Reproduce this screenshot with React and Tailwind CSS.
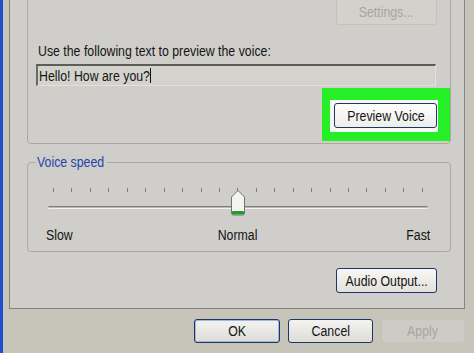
import React from "react";

function Txt({ children, origin = "origin-center" }) {
  return <span className={"inline-block whitespace-nowrap scale-x-[0.88] " + origin}>{children}</span>;
}

function Btn({ children, className = "" }) {
  return (
    <div
      className={
        "flex items-center justify-center rounded-[3px] border text-[14px] leading-[16px] " + className
      }
    >
      <Txt>{children}</Txt>
    </div>
  );
}

export default function App() {
  const ticks = Array.from({ length: 21 });
  return (
    <div className="w-[474px] h-[353px] overflow-hidden flex bg-[#c7c4b9] font-['Liberation_Sans',Arial,sans-serif] text-[#141414]">
      <div className="w-[3px] h-full shrink-0 bg-[#1f4fd0]" />
      <div className="flex flex-col shrink-0">
        {/* tab page */}
        <div className="ml-[6px] mt-[-10px] w-[456px] h-[319px] border border-[#85857f] bg-[#cfcecA] bg-[#cecdc8] flex flex-col pl-[17px] pr-[13px]">
          {/* upper group */}
          <div className="relative h-[153px] border border-[#a9a9a1] rounded-[4px] flex flex-col">
            <div className="absolute left-[294px] top-[96px] w-[128px] h-[53px] bg-[#27ef27]" />
            <div className="absolute left-[302px] top-[108px] w-[108px] h-[32px] bg-[#f7f7f5]" />
            <Btn className="mt-[6px] self-end mr-[13px] w-[101px] h-[27px] border-[#c3c2ba] text-[#a6a59e] bg-[#d2d1cc]">
              Settings...
            </Btn>
            <div className="mt-[18px] ml-[10px] text-[14px] leading-[16px]">
              <Txt origin="origin-left">Use the following text to preview the voice:</Txt>
            </div>
            <div className="mt-[5px] ml-[8px] w-[400px] h-[22px] border-t-2 border-l-2 border-t-[#5d5d58] border-l-[#6a6a65] border-b border-r border-b-[#e2e1dc] border-r-[#e2e1dc] bg-[#d3d2cd] flex items-center pl-[1px]">
              <div className="text-[14px] leading-[16px] flex items-center">
                <span className="inline-block w-[111px] overflow-visible">
                  <Txt origin="origin-left">Hello! How are you?</Txt>
                </span>
                <span className="inline-block w-px h-[15px] bg-[#111]" />
              </div>
            </div>
            <Btn className="relative z-10 mt-[17px] self-end mr-[13px] w-[103px] h-[25px] border-[#1f3566] bg-linear-to-b from-[#fdfdfc] to-[#eeeeea]">
              Preview Voice
            </Btn>
          </div>

          {/* voice speed group */}
          <div className="relative mt-[18px] h-[90px] border border-[#a9a9a1] rounded-[4px] flex flex-col">
            <div className="absolute left-[7px] top-[-9px] w-[72px] px-[2px] bg-[#cecdc8] text-[14px] leading-[16px] text-[#1f45b5]">
              <Txt origin="origin-left">Voice speed</Txt>
            </div>
            <div className="relative ml-[18px] w-[384px] flex flex-col">
              <div className="mt-[25px] h-[4px] flex justify-between px-[7px]">
                {ticks.map((_, i) => (
                  <div key={i} className="w-px h-[4px] bg-[#7c7c78]" />
                ))}
              </div>
              <div className="mt-[14px] mx-[2px] h-[3px] rounded-full border-t border-t-[#7f7f7a] border-b border-b-[#f2f2ee] bg-[#b9b8b3]" />
              <div className="absolute left-[185px] top-[27px]">
                <svg width="14" height="26" viewBox="0 0 14 26">
                  <path d="M7 0.5 L13.5 7 L13.5 23 Q13.5 25 11.5 25 L2.5 25 Q0.5 25 0.5 23 L0.5 7 Z" fill="#f4f4f0" stroke="#6e766e" />
                  <rect x="1" y="21" width="12" height="3.5" rx="1" fill="#1f9d2a" />
                </svg>
              </div>
              <div className="mt-[18px] grid grid-cols-3 text-[14px] leading-[16px]">
                <div className="text-left">
                  <Txt origin="origin-left">Slow</Txt>
                </div>
                <div className="text-center">
                  <Txt>Normal</Txt>
                </div>
                <div className="text-right">
                  <Txt origin="origin-right">Fast</Txt>
                </div>
              </div>
            </div>
          </div>

          <Btn className="mt-[16px] self-end mr-[14px] w-[101px] h-[25px] border-[#1f3566] bg-linear-to-b from-[#f7f7f5] to-[#e2e1db]">
            Audio Output...
          </Btn>
        </div>

        {/* bottom buttons */}
        <div className="mt-[10px] flex justify-end gap-[8px]">
          <Btn className="w-[86px] h-[24px] border-[#1f3566] bg-linear-to-b from-[#f3f3f1] to-[#dddcd6] shadow-[inset_0_0_0_1px_#9fb6de]">
            OK
          </Btn>
          <Btn className="w-[85px] h-[24px] border-[#1f3566] bg-linear-to-b from-[#f3f3f1] to-[#dddcd6]">
            Cancel
          </Btn>
          <Btn className="w-[84px] h-[24px] border-[#c4c3bb] text-[#a6a59e] bg-[#cdcbc4]">
            Apply
          </Btn>
        </div>
      </div>
    </div>
  );
}
